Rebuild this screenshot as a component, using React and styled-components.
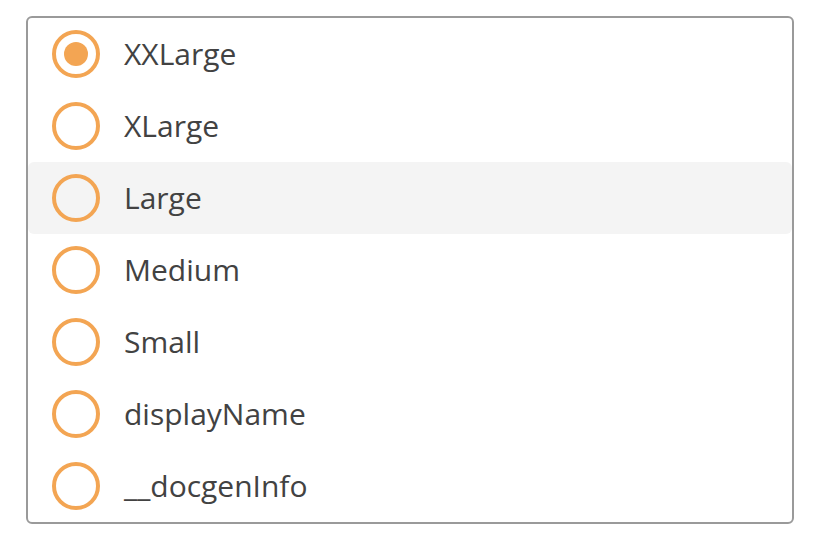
import styled, { createGlobalStyle } from "styled-components"

const GlobalStyle = createGlobalStyle`
  body {
    margin: 0;
    background: #fff;
    font-family: "Open Sans", "Noto Sans", sans-serif;
  }
`

const Page = styled.div`
  padding: 16px 0 0 26px;
`

const RadioGroup = styled.div`
  width: 764px;
  border: 2px solid #9a9a9a;
  border-radius: 6px;
  display: flex;
  flex-direction: column;
`

const Option = styled.label`
  height: 72px;
  display: flex;
  align-items: center;
  gap: 24px;
  padding-left: 24px;
  border-radius: 6px;
  background: ${(p) => (p.$hover ? "#f4f4f4" : "transparent")};
  cursor: pointer;
`

const Circle = styled.span`
  box-sizing: border-box;
  width: 48px;
  height: 48px;
  border: 4px solid #f3a553;
  border-radius: 50%;
  display: flex;
  align-items: center;
  justify-content: center;
  flex-shrink: 0;
`

const Dot = styled.span`
  width: 24px;
  height: 24px;
  border-radius: 50%;
  background: #f3a553;
`

const Label = styled.span`
  font-size: 30px;
  color: #424242;
  line-height: 1;
`

const options = ["XXLarge", "XLarge", "Large", "Medium", "Small", "displayName", "__docgenInfo"]

export default function App() {
  return (
    <>
      <GlobalStyle />
      <Page>
        <RadioGroup>
          {options.map((name, i) => (
            <Option key={name} $hover={name === "Large"}>
              <Circle>{i === 0 && <Dot />}</Circle>
              <Label>{name}</Label>
            </Option>
          ))}
        </RadioGroup>
      </Page>
    </>
  )
}
